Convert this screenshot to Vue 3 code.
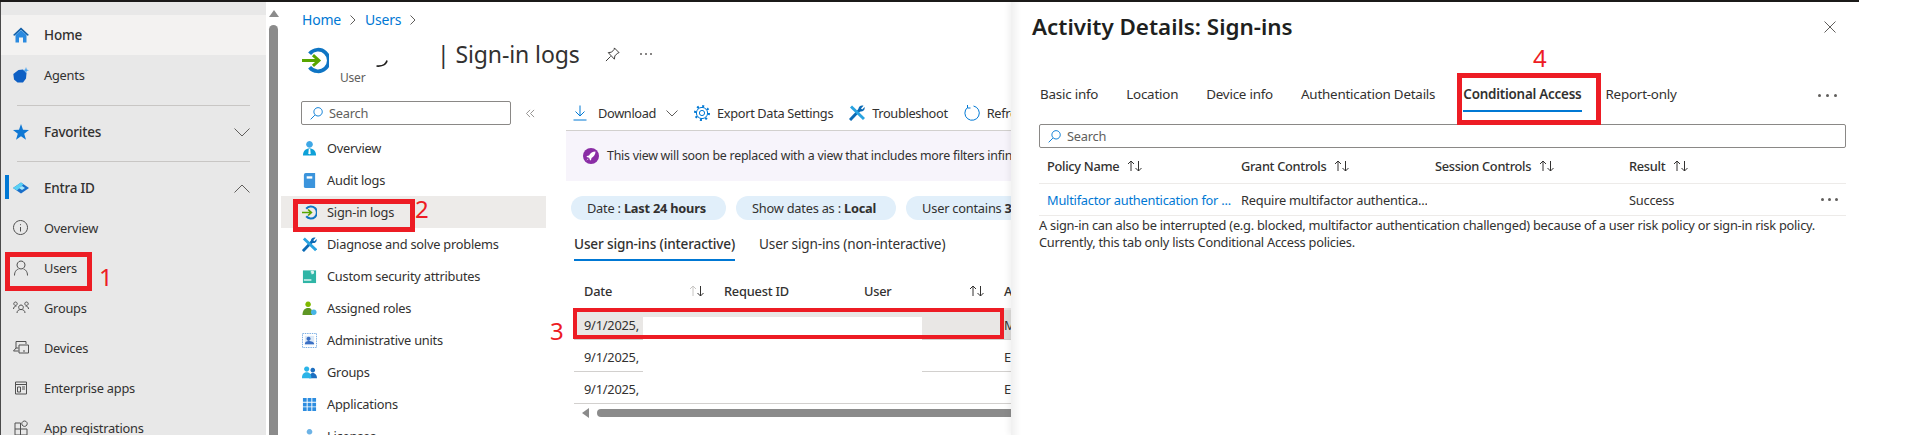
<script setup>
const navTop = [
  { label: 'Home', active: true, semi: true, icon: [
    { d: 'M8 0.5 L16 8 L14.5 8.8 L8 2.8 L1.5 8.8 L0 8 Z', fill: '#0f5ea8' },
    { d: 'M2.5 8 L8 3 L13.5 8 V15.5 H10 V10.5 H6 V15.5 H2.5 Z', fill: '#2a8ae0' }
  ] },
  { label: 'Agents', icon: [
    { d: 'M5.5 3 L10 2.5 L13.5 6 L13 11.5 L10 15.5 H4.5 L1 12.5 L0.3 7 Z', fill: '#0d5fc4' },
    { d: 'M13 0 L13.8 2.4 L16 3.2 L13.8 4 L13 6.4 L12.2 4 L10 3.2 L12.2 2.4 Z', fill: '#4aa3ee' }
  ] }
]
const navEntra = [
  { label: 'Overview', icon: [
    { d: 'M7.5 0.5 a7 7 0 1 0 0.01 0 Z' },
    { d: 'M7.5 7 V11.5 M7.5 4.2 V5.2' }
  ] },
  { label: 'Users', icon: [
    { d: 'M8 1 a4 4 0 1 0 0.01 0 Z' },
    { d: 'M1.5 15.5 C1.5 11 4 9.5 5.5 9 M14.5 15.5 C14.5 11 12 9.5 10.5 9' }
  ] },
  { label: 'Groups', icon: [
    { d: 'M8 5 a2.3 2.3 0 1 0 0.01 0 Z M2.5 2 a1.7 1.7 0 1 0 0.01 0 Z M13.5 2 a1.7 1.7 0 1 0 0.01 0 Z' },
    { d: 'M4 13 C4 10.5 6 9.5 8 9.5 C10 9.5 12 10.5 12 13 M0.5 9 C0.5 7.5 1.5 6 3.5 6 M15.5 9 C15.5 7.5 14.5 6 12.5 6' }
  ] },
  { label: 'Devices', icon: [
    { d: 'M3 8 V1.5 H13 V4 M6 5 H15.5 V13 H6 Z M0.5 11 L3 8 H5.5 M0.5 11 H5.5 M10 11 H12' }
  ] },
  { label: 'Enterprise apps', icon: [
    { d: 'M2.5 2 H13.5 V14 H2.5 Z' },
    { d: 'M2.5 4.5 H13.5' },
    { d: 'M4.5 7 H7.5 V12 H4.5 Z M9 7 H12 M9 9 H12' }
  ] },
  { label: 'App registrations', icon: [
    { d: 'M2 3 H7.5 V15 H2 Z M2 9 H14 V15 H7.5' },
    { d: 'M11.5 1 a2.7 2.7 0 1 0 0.01 0 Z' }
  ] }
]

const tools = [
  { d: 'M1 15 L11 4.5', stroke: '#0b6ab5', width: 3 },
  { d: 'M2 1.5 L15 14', stroke: '#29a3e0', width: 3 },
  { d: 'M9.5 5 C9 2 11.5 0 14.5 0.8 L12 3.4 L13.2 4.6 L15.6 2 C16.2 5 13.8 7 11 6.4 Z', fill: '#0b6ab5' }
]
const signIn = [
  { d: 'M4.5 4 A6.4 6.4 0 1 1 4.5 12', stroke: '#0f75c4', width: 2.2 },
  { d: 'M0 8 H9.5 M6.5 4.8 L10 8 L6.5 11.2', stroke: '#58a500', width: 1.8 }
]

const menu = [
  { label: 'Overview', icon: [
    { d: 'M8 0 a3.6 3.6 0 1 0 0.01 0 Z', fill: '#3ea7e6' },
    { d: 'M1 15.5 C1 10.5 4 8 8 8 C12 8 15 10.5 15 15.5 Z', fill: '#0ea1d8' },
    { d: 'M7.2 8.5 H8.8 L9.2 13 L8 14.5 L6.8 13 Z', fill: '#fff' }
  ] },
  { label: 'Audit logs', icon: [
    { d: 'M2 2 a2 2 0 0 1 2 -2 H14 V16 H4 a2 2 0 0 1 -2 -2 Z', fill: '#3b94dc' },
    { d: 'M5 3.5 H11 V6 H5 Z', fill: '#fff' }
  ] },
  { label: 'Sign-in logs', selected: true, icon: signIn },
  { label: 'Diagnose and solve problems', icon: tools },
  { label: 'Custom security attributes', icon: [
    { d: 'M1 1.5 H15 V15 H1 Z', fill: '#2fb5a6' },
    { d: 'M2 11 H10 V12.5 H2 Z M9 3.5 a2 2 0 1 1 2 2 H10 V4 Z', fill: '#d9f3ef' }
  ] },
  { label: 'Assigned roles', icon: [
    { d: 'M6.5 0.5 a3 3 0 1 0 0.01 0 Z', fill: '#7fba00' },
    { d: 'M0.5 15 C0.5 10 3 7.5 6.5 7.5 C10 7.5 11 9.5 11 15 Z', fill: '#5e9624' },
    { d: 'M12.5 9 a3 3 0 1 0 0.01 0 Z', fill: '#47b5e5' }
  ] },
  { label: 'Administrative units', icon: [
    { d: 'M0.5 0.5 H15.5 V15.5 H0.5 Z', stroke: '#4a90d9', width: 0.8, dash: '1.5 1' },
    { d: 'M3 3 H13 V13 H3 Z', fill: '#dbe9f7' },
    { d: 'M7 4 a2.2 2.2 0 1 0 0.01 0 Z M3 12 C3 9.5 5 8.5 7 8.5 C10 8.5 13 9.5 13 12 Z', fill: '#3a6fc4' }
  ] },
  { label: 'Groups', icon: [
    { d: 'M11.5 3 a2.5 2.5 0 1 0 0.01 0 Z M7.5 14 C7.5 10 9.5 8.5 11.5 8.5 C13.5 8.5 16 10 16 14 Z', fill: '#1e6fc0' },
    { d: 'M5 1.5 a2.8 2.8 0 1 0 0.01 0 Z M0 14 C0 9.5 2.5 7.8 5 7.8 C7.5 7.8 10 9.5 10 14 Z', fill: '#2bb4e8' }
  ] },
  { label: 'Applications', icon: [
    { d: 'M1 1 H5 V5 H1 Z M6 1 H10 V5 H6 Z M11 1 H15 V5 H11 Z M1 6 H5 V10 H1 Z M6 6 H10 V10 H6 Z M11 6 H15 V10 H11 Z M1 11 H5 V15 H1 Z M6 11 H10 V15 H6 Z M11 11 H15 V15 H11 Z', fill: '#2d8de0' }
  ] },
  { label: 'Licenses', icon: [
    { d: 'M8 0 a3 3 0 1 0 0.01 0 Z', fill: '#6db3e6' }
  ] }
]

const panelTabs = ['Basic info', 'Location', 'Device info', 'Authentication Details', 'Conditional Access', 'Report-only']
const panelCols = ['Policy Name', 'Grant Controls', 'Session Controls', 'Result']
const rows = [
  { id: 1, date: '9/1/2025,', next: 'M', selected: true },
  { id: 2, date: '9/1/2025,', next: 'E' },
  { id: 3, date: '9/1/2025,', next: 'E' }
]
</script>

<template>
  <div class="page">
    <nav class="nav">
      <a v-for="item in navTop" :key="item.label" class="nav-item" :class="{ active: item.active, semi: item.semi }">
        <svg class="nav-icon" viewBox="0 0 16 16">
          <path v-for="(p, i) in item.icon" :key="i" :d="p.d" :fill="p.fill" />
        </svg>
        {{ item.label }}
      </a>
      <div class="nav-line"></div>
      <a class="nav-item semi">
        <svg class="nav-icon" viewBox="0 0 16 16">
          <path d="M8 0 L10 5.7 L16 6 L11.2 9.7 L13 15.7 L8 12.2 L3 15.7 L4.8 9.7 L0 6 L6 5.7 Z" fill="#0f78d4" />
        </svg>
        Favorites
        <svg class="nav-caret" viewBox="0 0 16 9"><path d="M0.5 0.5 L8 8 L15.5 0.5" /></svg>
      </a>
      <div class="nav-line second"></div>
      <a class="nav-item semi entra">
        <span class="entra-mark"></span>
        <svg class="nav-icon" viewBox="0 0 16 16">
          <path d="M8 2.5 L16 8 L8 13.5 L0 8 Z" fill="#1a6fc9" />
          <path d="M8 2.5 L0 8 L4 10.6 L10.5 4.2 Z" fill="#5ad1f4" />
          <path d="M6 8 L9 6 L12 8 L9 10 Z" fill="#a7e7fa" />
        </svg>
        Entra ID
        <svg class="nav-caret" viewBox="0 0 16 9"><path d="M0.5 8.5 L8 1 L15.5 8.5" /></svg>
      </a>
      <a v-for="item in navEntra" :key="item.label" class="nav-item">
        <svg class="nav-icon line" viewBox="0 0 16 16">
          <path v-for="(p, i) in item.icon" :key="i" :d="p.d" />
        </svg>
        {{ item.label }}
      </a>
    </nav>

    <div class="nav-scroll">
      <span class="arrow-up"></span>
      <span class="thumb"></span>
    </div>

    <div class="blade">
      <div class="crumbs">
        <a>Home</a>
        <svg viewBox="0 0 6 10"><path d="M0.5 0.5 L5 5 L0.5 9.5" /></svg>
        <a>Users</a>
        <svg viewBox="0 0 6 10"><path d="M0.5 0.5 L5 5 L0.5 9.5" /></svg>
      </div>

      <header class="head">
        <svg class="head-icon" viewBox="0 0 16 16">
          <path v-for="(p, i) in signIn" :key="i" :d="p.d" fill="none" :stroke="p.stroke" :stroke-width="p.width" />
        </svg>
        <div class="head-name">
          <svg class="name-scrap" viewBox="0 0 12 7"><path d="M0.5 6 C5 6.5 10 5 11 0.5" /></svg>
          <span class="head-sub">User</span>
        </div>
        <h1>| Sign-in logs</h1>
        <svg class="pin" viewBox="0 0 16 16"><path d="M10 1 L15 6 L13.5 6.5 L10.5 9.5 L10 13 L3.5 6 L7 5.5 L9.8 2.5 Z M6 10 L1 15" /></svg>
        <span class="head-more"><i></i><i></i><i></i></span>
      </header>

      <div class="body">
        <aside class="menu">
          <div class="menu-top">
            <div class="search">
              <svg class="search-icon" viewBox="0 0 14 14"><path d="M8.7 0.7 a4.5 4.5 0 1 0 0.01 0 Z M5.3 8.7 L0.7 13.3" /></svg>
              Search
            </div>
            <svg class="collapse" viewBox="0 0 10 10"><path d="M4.5 1 L0.5 5 L4.5 9 M9 1 L5 5 L9 9" /></svg>
          </div>
          <a v-for="item in menu" :key="item.label" class="menu-item" :class="{ selected: item.selected }">
            <svg viewBox="0 0 16 16">
              <path v-for="(p, i) in item.icon" :key="i" :d="p.d" :fill="p.fill || 'none'" :stroke="p.stroke" :stroke-width="p.width" :stroke-dasharray="p.dash" />
            </svg>
            {{ item.label }}
          </a>
        </aside>

        <main class="main">
          <div class="toolbar">
            <button class="tool first">
              <svg viewBox="0 0 16 16"><path class="blue" d="M8 0.5 V11 M3.5 6.5 L8 11 L12.5 6.5 M1.5 15 H14.5" /></svg>
              Download
              <svg class="tool-caret" viewBox="0 0 12 7"><path d="M0.5 0.5 L6 6 L11.5 0.5" /></svg>
            </button>
            <button class="tool">
              <svg viewBox="0 0 16 16">
                <circle class="blue" cx="8" cy="8" r="2.6" />
                <circle class="blue" cx="8" cy="8" r="5.6" />
                <circle class="blue teeth" cx="8" cy="8" r="7" />
              </svg>
              Export Data Settings
            </button>
            <button class="tool">
              <svg viewBox="0 0 16 16">
                <path v-for="(p, i) in tools" :key="i" :d="p.d" :fill="p.fill || 'none'" :stroke="p.stroke" :stroke-width="p.width" />
              </svg>
              Troubleshoot
            </button>
            <button class="tool">
              <svg viewBox="0 0 16 16"><path class="blue" d="M9.5 1 A7.2 7.2 0 1 1 3.5 2.5 M3.5 0 V3 H6.5" /></svg>
              Refresh
            </button>
          </div>

          <div class="banner">
            <svg viewBox="0 0 16 16">
              <circle cx="8" cy="8" r="8" fill="#8a2da5" />
              <path d="M12.5 3.5 C9.5 3.5 7.5 5 6 7.5 L4 8 L3.5 9 L5.5 9.5 L6.5 10.5 L7 12.5 L8 12 L8.5 10 C11 8.5 12.5 6.5 12.5 3.5 Z M5 10.5 L3.2 12.8 L5.5 11 Z" fill="#fff" />
            </svg>
            This view will soon be replaced with a view that includes more filters infinite scroll.
          </div>

          <div class="chips">
            <span class="chip">Date : <b>Last 24 hours</b></span>
            <span class="chip">Show dates as : <b>Local</b></span>
            <span class="chip">User contains <b>3</b></span>
          </div>

          <div class="log-tabs">
            <a class="log-tab on">User sign-ins (interactive)</a>
            <a class="log-tab">User sign-ins (non-interactive)</a>
          </div>

          <div class="log-table">
            <div class="log-row log-head">
              <span class="cell sortable">Date
                <svg class="sort" viewBox="0 0 16 12"><path class="up dim" d="M4 11 V1 M1 4 L4 1 L7 4" /><path class="down" d="M11.5 1 V11 M8.5 8 L11.5 11 L14.5 8" /></svg>
              </span>
              <span class="cell">Request ID</span>
              <span class="cell sortable">User
                <svg class="sort" viewBox="0 0 16 12"><path class="up" d="M4 11 V1 M1 4 L4 1 L7 4" /><path class="down" d="M11.5 1 V11 M8.5 8 L11.5 11 L14.5 8" /></svg>
              </span>
              <span class="cell">A</span>
            </div>
            <div v-for="row in rows" :key="row.id" class="log-row" :class="{ picked: row.selected }">
              <span class="cell">{{ row.date }}</span>
              <span class="cell"></span>
              <span class="cell"></span>
              <span class="cell next">{{ row.next }}</span>
            </div>
            <div class="redact"></div>
          </div>

          <div class="h-scroll">
            <span class="arrow-left"></span>
            <span class="h-thumb"></span>
          </div>
        </main>
      </div>
    </div>

    <!-- details panel lies over the blade -->
    <section class="panel">
      <div class="panel-head">
        <h2>Activity Details: Sign-ins</h2>
        <svg class="close" viewBox="0 0 12 12"><path d="M0.5 0.5 L11.5 11.5 M11.5 0.5 L0.5 11.5" /></svg>
      </div>
      <div class="panel-tabs">
        <a v-for="tab in panelTabs" :key="tab" class="panel-tab" :class="{ on: tab === 'Conditional Access' }">{{ tab }}</a>
        <span class="tabs-more">
          <i></i><i></i><i></i>
        </span>
      </div>
      <div class="search wide">
        <svg class="search-icon" viewBox="0 0 14 14"><path d="M8.7 0.7 a4.5 4.5 0 1 0 0.01 0 Z M5.3 8.7 L0.7 13.3" /></svg>
        Search
      </div>
      <div class="p-row p-head">
        <span v-for="col in panelCols" :key="col" class="p-cell">{{ col }}
          <svg class="sort" viewBox="0 0 16 12"><path class="up" d="M4 11 V1 M1 4 L4 1 L7 4" /><path class="down" d="M11.5 1 V11 M8.5 8 L11.5 11 L14.5 8" /></svg>
        </span>
      </div>
      <div class="p-row">
        <span class="p-cell link">Multifactor authentication for ...</span>
        <span class="p-cell">Require multifactor authentica...</span>
        <span class="p-cell"></span>
        <span class="p-cell">Success</span>
        <span class="row-more"><i></i><i></i><i></i></span>
      </div>
      <p class="note">A sign-in can also be interrupted (e.g. blocked, multifactor authentication challenged) because of a user risk policy or sign-in risk policy.<br />Currently, this tab only lists Conditional Access policies.</p>
    </section>

    <!-- red markup drawn on top of the screenshot -->
    <span class="box box-users"></span>
    <span class="box box-logs"></span>
    <span class="box box-row"></span>
    <span class="box box-tab"></span>
    <span class="num num-1">1</span>
    <span class="num num-2">2</span>
    <span class="num num-3">3</span>
    <span class="num num-4">4</span>
  </div>
</template>

<style>
html, body { margin: 0; background: #fff; }
</style>

<style scoped>
.page {
  position: relative;
  display: flex;
  width: 1859px;
  height: 433px;
  overflow: hidden;
  border-top: 2px solid #1b1a19;
  background: #fff;
  color: #323130;
  font: 12.8px/18px "Noto Sans", "Open Sans", sans-serif;
  letter-spacing: -0.22px;
}
a { text-decoration: none; }
svg { flex: none; }

/* left portal nav */
.nav {
  flex: none;
  width: 265px;
  padding-top: 13px;
  border-left: 1px solid #4a4a4a;
  background: #e8e8e8;
}
.nav-item {
  display: flex;
  align-items: center;
  height: 40px;
  padding: 0 16px 0 12px;
  gap: 15px;
  position: relative;
}
.nav-item.active { background: #f3f2f1; }
.nav-item.semi { font-weight: 500; font-size: 13.5px; }
.nav-icon { width: 16px; height: 16px; }
.nav-icon.line path { fill: none; stroke: #505050; stroke-width: 1; }
.nav-caret {
  width: 16px;
  height: 9px;
  margin-left: auto;
  fill: none;
  stroke: #605e5c;
}
.nav-line { height: 1px; margin: 10px 16px 6px; background: #c8c6c4; }
.nav-line.second { margin-top: 9px; }
.entra-mark {
  position: absolute;
  left: 4px;
  top: 7px;
  width: 4px;
  height: 24px;
  background: #0078d4;
}

.nav-scroll {
  flex: none;
  display: flex;
  flex-direction: column;
  align-items: center;
  width: 15px;
  padding: 8px 3px 0 3px;
  box-sizing: border-box;
}
.arrow-up {
  width: 0;
  height: 0;
  border: 5px solid transparent;
  border-top: 0;
  border-bottom: 7px solid #8b8b8b;
}
.thumb {
  width: 9px;
  height: 420px;
  margin-top: 8px;
  border-radius: 5px 5px 0 0;
  background: #8b8b8b;
}

/* blade */
.blade { flex: 1; min-width: 0; }
.crumbs {
  display: flex;
  align-items: center;
  gap: 9px;
  height: 36px;
  padding-left: 21px;
  font-size: 14px;
}
.crumbs a { color: #0078d4; }
.crumbs svg { width: 6px; height: 10px; fill: none; stroke: #605e5c; }

.head { display: flex; align-items: flex-start; height: 52px; padding-left: 21px; }
.head-icon { width: 27px; height: 27px; margin-top: 9px; }
.head-name {
  display: flex;
  flex-direction: column;
  width: 97px;
  padding-left: 11px;
}
.name-scrap { width: 12px; height: 7px; margin: 22px 0 0 36px; fill: none; stroke: #201f1e; stroke-width: 1.6; }
.head-sub { margin-top: 2px; font-size: 12px; color: #605e5c; }
h1 { margin: 0; padding-top: 1px; font-size: 23px; line-height: 30px; font-weight: 400; letter-spacing: -0.1px; }
.pin { width: 15px; height: 15px; margin: 9px 0 0 25px; fill: none; stroke: #323130; }
.head-more { display: flex; gap: 3px; margin: 15px 0 0 20px; }
.head-more i { width: 2px; height: 2px; border-radius: 50%; background: #605e5c; }

.body { display: flex; }
.menu { flex: none; width: 265px; }
.menu-top {
  display: flex;
  align-items: center;
  padding: 11px 0 7px 20px;
}
.search {
  display: flex;
  align-items: center;
  gap: 6px;
  box-sizing: border-box;
  width: 210px;
  height: 24px;
  padding-left: 8px;
  border: 1px solid #8a8886;
  border-radius: 2px;
  color: #605e5c;
}
.search-icon { width: 13px; height: 13px; fill: none; stroke: #0078d4; }
.collapse { width: 9px; height: 9px; margin-left: 15px; fill: none; stroke: #8a8886; }
.menu-item {
  display: flex;
  align-items: center;
  gap: 10px;
  height: 32px;
  padding-left: 21px;
}
.menu-item svg { width: 15px; height: 15px; }
.menu-item.selected { background: #edebe9; }

.main { flex: 1; min-width: 0; padding-left: 20px; }
.toolbar {
  display: flex;
  align-items: center;
  height: 34px;
  padding: 6px 0 0 6px;
  border-bottom: 1px solid #d2d0ce;
  gap: 16px;
}
.tool {
  display: flex;
  align-items: center;
  gap: 7px;
  padding: 0;
  border: 0;
  background: none;
  color: #323130;
  font: inherit;
  letter-spacing: -0.35px;
  white-space: nowrap;
}
.tool.first { gap: 10px; }
.tool svg { width: 16px; height: 16px; }
.tool svg .blue { fill: none; stroke: #0078d4; }
.tool svg .teeth { stroke-width: 2; stroke-dasharray: 2 3.5; }
.tool .tool-caret { width: 12px; height: 7px; fill: none; stroke: #605e5c; }
.banner {
  display: flex;
  align-items: center;
  gap: 8px;
  height: 50px;
  padding-left: 17px;
  background: #f7f4fb;
  font-size: 12.4px;
  letter-spacing: -0.25px;
  white-space: nowrap;
  overflow: hidden;
}
.banner svg { width: 16px; height: 16px; }
.chips { display: flex; gap: 10px; padding: 15px 0 0 5px; white-space: nowrap; }
.chip {
  height: 24px;
  padding: 0 20px 0 16px;
  border-radius: 12px;
  background: #e1effa;
  line-height: 24px;
}
.chip b { font-weight: 700; }
.log-tabs { display: flex; gap: 24px; padding: 8px 0 0 8px; font-size: 13.6px; letter-spacing: -0.15px; }
.log-tab { padding: 6px 0; white-space: nowrap; border-bottom: 2px solid transparent; line-height: 19px; }
.log-tab.on { border-color: #0078d4; font-weight: 500; }
.log-table { position: relative; width: 460px; margin: 9px 0 0 8px; }
.log-row {
  display: grid;
  grid-template-columns: 140px 140px 140px 40px;
  height: 32px;
  padding-top: 2px;
  border-bottom: 1px solid #d2d0ce;
  box-sizing: border-box;
  align-items: center;
}
.log-row.picked { background: #e9e7e5; }
.log-row.picked .next { align-self: stretch; background: linear-gradient(90deg, transparent 10px, #dcdbd9 10px); }
.log-head { height: 38px; padding-top: 3px; border-bottom: 0; font-weight: 500; }
.cell { display: flex; align-items: center; padding-left: 10px; min-width: 0; white-space: nowrap; overflow: hidden; }
.sortable { justify-content: space-between; padding-right: 9px; }
.sort { width: 16px; height: 12px; fill: none; stroke-width: 1; }
.sort .up { stroke: #323130; }
.sort .up.dim { stroke: #c8c6c4; }
.sort .down { stroke: #323130; }
.redact {
  position: absolute;
  left: 69px;
  top: 47px;
  width: 279px;
  height: 56px;
  background: #fff;
}
.h-scroll { display: flex; align-items: center; gap: 8px; width: 460px; height: 9px; margin: 4px 0 0 8px; padding-left: 8px; box-sizing: border-box; }
.arrow-left { width: 0; height: 0; border: 5px solid transparent; border-left: 0; border-right: 7px solid #8b8b8b; }
.h-thumb { flex: 1; height: 8px; border-radius: 4px 0 0 4px; background: #8b8b8b; }

/* activity details */
.panel {
  position: absolute;
  left: 1011px;
  right: 0;
  top: 0;
  bottom: 0;
  background: linear-gradient(90deg, #f0f0f0, #fff 10px);
  box-shadow: -3px 0 5px rgba(0, 0, 0, 0.05);
}
.panel-head { display: flex; align-items: center; justify-content: space-between; height: 50px; padding: 0 23px 0 21px; }
h2 { margin: 0; font-size: 22.4px; line-height: 28px; font-weight: 600; color: #201f1e; letter-spacing: 0; }
.close { width: 12px; height: 12px; fill: none; stroke: #605e5c; }
.panel-tabs {
  display: flex;
  gap: 28px;
  height: 60px;
  padding: 21px 0 0 29px;
  box-sizing: border-box;
  position: relative;
  font-size: 13.4px;
}
.panel-tab { height: 39px; box-sizing: border-box; padding-top: 12px; white-space: nowrap; }
.panel-tab.on { margin-right: -4px; border-bottom: 2px solid #0078d4; font-weight: 600; }
.tabs-more, .row-more { display: flex; gap: 4px; align-items: center; }
.tabs-more i, .row-more i { width: 3px; height: 3px; border-radius: 50%; background: #605e5c; }
.tabs-more { position: absolute; right: 22px; top: 42px; gap: 5px; }
.row-more { margin-left: 6px; }
.search.wide { width: 807px; margin: 12px 0 0 28px; }
.p-row {
  display: grid;
  grid-template-columns: 194px 194px 194px 194px 31px;
  width: 807px;
  height: 32px;
  margin-left: 28px;
  align-items: center;
  border-bottom: 1px solid #edebe9;
  box-sizing: border-box;
}
.p-head { height: 36px; font-weight: 500; letter-spacing: -0.3px; }
.p-cell { display: flex; align-items: center; gap: 8px; padding-left: 8px; white-space: nowrap; overflow: hidden; }
.link { color: #0078d4; }
.note { margin: 1px 0 0 28px; line-height: 17px; white-space: nowrap; letter-spacing: -0.24px; }

/* markup */
.box { position: absolute; box-sizing: border-box; border: 5px solid #ed1c24; }
.box-users { left: 5px; top: 250px; width: 87px; height: 39px; }
.box-logs { left: 293px; top: 197px; width: 122px; height: 33px; }
.box-row { left: 573px; top: 306px; width: 431px; height: 31px; border-width: 4px; }
.box-tab { left: 1457px; top: 71px; width: 144px; height: 52px; }
.num {
  position: absolute;
  color: #ed1c24;
  font: 24px/24px "Noto Sans", sans-serif;
  letter-spacing: 0;
}
.num-1 { left: 99px; top: 263px; }
.num-2 { left: 415px; top: 195px; }
.num-3 { left: 550px; top: 317px; }
.num-4 { left: 1533px; top: 44px; }
</style>
